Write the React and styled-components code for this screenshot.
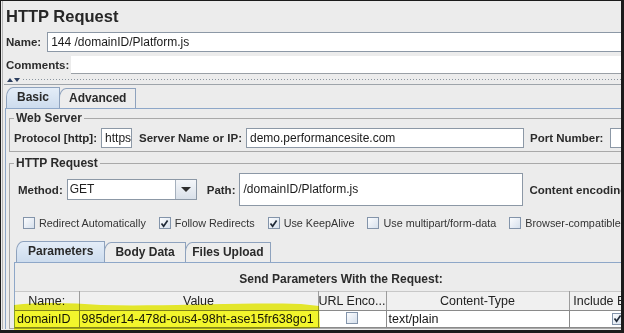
import React from "react";
import styled, { createGlobalStyle } from "styled-components";

const GlobalStyle = createGlobalStyle`
  html, body { margin: 0; padding: 0; background: #fff; }
  body { font-family: "Liberation Sans", Arial, sans-serif; color: #1f1f1f; }
  * { box-sizing: border-box; }
`;

const Frame = styled.div`
  position: relative;
  width: 624px;
  height: 333px;
  overflow: hidden;
  background: #ececec;
  border-top: 1px solid #1b1b1b;
  border-left: 1px solid #1b1b1b;
  border-right: 3px solid #1b1b1b;
  border-bottom: 3px solid #1b1b1b;
`;

const Window = styled.div`
  width: 680px;
  margin-left: 1px;
  border-left: 1px solid #b4b4b4;
  padding-left: 1px;
`;

const Title = styled.div`
  height: 30px;
  line-height: 30px;
  padding-left: 2px;
  font-size: 16.5px;
  font-weight: bold;
  color: #262626;
`;

const FormRow = styled.div`
  display: flex;
  align-items: ${(p) => p.$align || "center"};
  height: ${(p) => p.$h}px;
  padding-left: ${(p) => p.$pl ?? 2}px;
  margin-top: ${(p) => p.$mt || 0}px;
  gap: ${(p) => p.$gap ?? 4}px;
`;

const Label = styled.span`
  flex: none;
  font-size: 11.5px;
  font-weight: bold;
  color: #2b2b2b;
  white-space: nowrap;
  margin-left: ${(p) => p.$ml || 0}px;
  padding-bottom: ${(p) => p.$pb || 0}px;
  line-height: 14px;
`;

const TextField = styled.div`
  height: ${(p) => p.$h || 20}px;
  width: ${(p) => (p.$w ? `${p.$w}px` : "auto")};
  flex: ${(p) => (p.$w ? "none" : 1)};
  margin-left: ${(p) => p.$ml || 0}px;
  background: #fff;
  border: 1px solid #8c98a6;
  font-size: 12px;
  line-height: ${(p) => (p.$h || 20) - 2}px;
  padding-left: 3px;
  color: #1a1a1a;
  white-space: nowrap;
  overflow: hidden;
`;

const CommentField = styled.div`
  flex: 1;
  height: 18px;
  margin-bottom: 1px;
  background: #fff;
  border-bottom: 1px solid #9aa0a6;
`;

const Splitter = styled.div`
  display: flex;
  align-items: center;
  height: 10px;
  padding-left: 3px;
  gap: 1px;
  border-bottom: 1px solid #9ea4aa;
`;

const Arrow = styled.span`
  width: 0;
  height: 0;
  border-left: 3.5px solid transparent;
  border-right: 3.5px solid transparent;
  ${(p) =>
    p.$up
      ? "border-bottom: 4px solid #2c3e5e;"
      : "border-top: 4px solid #2c3e5e;"}
`;

const Dots = styled.div`
  flex: 1;
  height: 3px;
  margin-left: 1px;
  background-image: radial-gradient(circle, #8a949e 0.8px, transparent 1px);
  background-size: 3px 3px;
`;

const TabStrip = styled.div`
  display: flex;
  align-items: flex-end;
  height: 21px;
  margin-top: ${(p) => p.$mt ?? 2}px;
  margin-left: ${(p) => p.$ml || 0}px;
`;

const Tab = styled.div`
  flex: none;
  height: 20px;
  padding: 0 ${(p) => p.$px || 10}px;
  font-size: 12px;
  font-weight: bold;
  line-height: 19px;
  color: #2a2a2a;
  border: 1px solid #8ea2bd;
  border-bottom: none;
  border-top-left-radius: 7px 10px;
  margin-left: -1px;
  background: ${(p) =>
    p.$active ? "linear-gradient(#e4edf8, #cddcee)" : "#ededed"};
  ${(p) => p.$active && "height: 21px; position: relative; z-index: 1;"}
`;

const TabPanel = styled.div`
  margin-left: ${(p) => p.$ml || 0}px;
  width: ${(p) => p.$w}px;
  border-left: 1px solid #8ea7c8;
  border-top: 1px solid #8ea7c8;
  padding-left: ${(p) => p.$pl || 0}px;
`;

const Group = styled.fieldset`
  margin: ${(p) => p.$mt || 0}px 0 0 0;
  padding: 0 0 ${(p) => p.$pb || 0}px 4px;
  border: 1px solid #a9a9a9;
  border-right: none;
  min-width: 0;
`;

const Legend = styled.legend`
  padding: 0 2px;
  margin-left: 0;
  font-size: 12px;
  font-weight: bold;
  line-height: 14px;
  color: #2b2b2b;
`;

const Select = styled.div`
  flex: none;
  display: flex;
  width: 130px;
  height: 21px;
  border: 1px solid #8c98a6;
  background: #fff;
`;

const SelectValue = styled.div`
  flex: 1;
  font-size: 12px;
  line-height: 19px;
  padding-left: 2px;
`;

const SelectButton = styled.div`
  width: 21px;
  display: flex;
  align-items: center;
  justify-content: center;
  border-left: 1px solid #a5b0bd;
  background: linear-gradient(#f4f6f9, #d9e0e9);
  &::after {
    content: "";
    border-left: 5px solid transparent;
    border-right: 5px solid transparent;
    border-top: 5px solid #2d2d2d;
  }
`;

const CheckRow = styled.div`
  display: flex;
  align-items: center;
  height: 18px;
  margin-top: 8px;
  padding-left: 9px;
  gap: 13px;
`;

const CheckItem = styled.label`
  flex: none;
  display: flex;
  align-items: center;
  gap: 4px;
  font-size: 10.8px;
  color: #333;
  white-space: nowrap;
`;

const Box = styled.span`
  display: inline-flex;
  align-items: center;
  justify-content: center;
  width: 12px;
  height: 12px;
  border: 1px solid #8394aa;
  background: linear-gradient(135deg, #fbfcfe, #d6e0ec);
`;

const Check = ({ checked }) => (
  <Box>
    {checked && (
      <svg width="9" height="9" viewBox="0 0 9 9">
        <path d="M1.5 4.5 L3.6 7.3 L7.6 1.4" fill="none" stroke="#1f2a38" strokeWidth="1.7" />
      </svg>
    )}
  </Box>
);

const Caption = styled.div`
  height: 28px;
  padding-top: 9px;
  text-align: center;
  font-size: 12px;
  font-weight: bold;
  line-height: 14px;
  color: #2b2b2b;
`;

const Table = styled.table`
  border-collapse: collapse;
  table-layout: fixed;
  width: 100%;
  font-size: 12.5px;
`;

const Th = styled.th`
  width: ${(p) => (p.$w ? `${p.$w}px` : "auto")};
  height: 19px;
  padding: 0;
  font-weight: normal;
  text-align: center;
  color: #222;
  background: #f0f0f0;
  border-top: 1px solid #c8c8c8;
  border-right: 1px solid #9c9c9c;
  border-bottom: 1px solid #8a8a8a;
  white-space: nowrap;
  overflow: hidden;
`;

const Td = styled.td`
  height: 17px;
  padding: 0 2px;
  text-align: ${(p) => p.$align || "left"};
  background: #fff;
  border-right: 1px solid #8a8a8a;
  border-bottom: 1px solid #8a8a8a;
  white-space: nowrap;
  overflow: hidden;
  color: #151515;
`;

const Highlight = styled.svg`
  position: absolute;
  left: 0;
  top: 0;
  pointer-events: none;
  mix-blend-mode: ${(p) => p.$blend || "normal"};
`;

export default function App() {
  return (
    <>
      <GlobalStyle />
      <Frame>
        <Window>
          <Title>HTTP Request</Title>
          <FormRow $h={21} $gap={6}>
            <Label>Name:</Label>
            <TextField>144 /domainID/Platform.js</TextField>
          </FormRow>
          <FormRow $h={23} $align="flex-end" $gap={2}>
            <Label $pb={3}>Comments:</Label>
            <CommentField />
          </FormRow>
          <Splitter>
            <Arrow $up />
            <Arrow />
            <Dots />
          </Splitter>
          <TabStrip $ml={3}>
            <Tab $active $px={10}>Basic</Tab>
            <Tab $px={9}>Advanced</Tab>
          </TabStrip>
          <TabPanel $ml={1} $w={676} $pl={3}>
            <Group $mt={2} $pb={3}>
              <Legend>Web Server</Legend>
              <FormRow $h={20} $pl={0} $mt={3}>
                <Label>Protocol [http]:</Label>
                <TextField $w={31}>https</TextField>
                <Label $ml={3}>Server Name or IP:</Label>
                <TextField $w={278}>demo.performancesite.com</TextField>
                <Label $ml={2}>Port Number:</Label>
                <TextField $w={60} $ml={3} />
              </FormRow>
            </Group>
            <Group $mt={4}>
              <Legend>HTTP Request</Legend>
              <FormRow $h={33} $pl={4} $mt={3}>
                <Label>Method:</Label>
                <Select>
                  <SelectValue>GET</SelectValue>
                  <SelectButton />
                </Select>
                <Label $ml={6}>Path:</Label>
                <TextField $w={284} $h={33}>/domainID/Platform.js</TextField>
                <Label $ml={2}>Content encoding:</Label>
                <TextField $w={60} />
              </FormRow>
              <CheckRow>
                <CheckItem><Check />Redirect Automatically</CheckItem>
                <CheckItem><Check checked />Follow Redirects</CheckItem>
                <CheckItem><Check checked />Use KeepAlive</CheckItem>
                <CheckItem><Check />Use multipart/form-data</CheckItem>
                <CheckItem><Check />Browser-compatible headers</CheckItem>
              </CheckRow>
              <TabStrip $ml={3} $mt={9}>
                <Tab $active $px={11}>Parameters</Tab>
                <Tab $px={10}>Body Data</Tab>
                <Tab $px={6.5}>Files Upload</Tab>
              </TabStrip>
              <TabPanel $w={653}>
                <Caption>Send Parameters With the Request:</Caption>
                <Table>
                  <thead>
                    <tr>
                      <Th $w={64}>Name:</Th>
                      <Th $w={239}>Value</Th>
                      <Th $w={68}>URL Enco...</Th>
                      <Th $w={183}>Content-Type</Th>
                      <Th>Include Equals?</Th>
                    </tr>
                  </thead>
                  <tbody>
                    <tr>
                      <Td>domainID</Td>
                      <Td>985der14-478d-ous4-98ht-ase15fr638go1</Td>
                      <Td $align="center"><Check /></Td>
                      <Td>text/plain</Td>
                      <Td $align="center"><Check checked /></Td>
                    </tr>
                  </tbody>
                </Table>
              </TabPanel>
            </Group>
          </TabPanel>
        </Window>
        <Highlight $blend="multiply" width="624" height="333" viewBox="0 0 624 333">
          <path
            d="M13 304 C40 301 70 302 100 304 C160 306 230 301 300 303 L318 305 L319 327 C280 328 240 329 214 329 L13 329 Z"
            fill="#f2f52c"
          />
        </Highlight>
        <Highlight width="624" height="333" viewBox="0 0 624 333">
          <path d="M13 328 L220 328 C214 330 212 331 210 333 L13 333 Z" fill="#f2f52c" />
        </Highlight>
      </Frame>
    </>
  );
}
